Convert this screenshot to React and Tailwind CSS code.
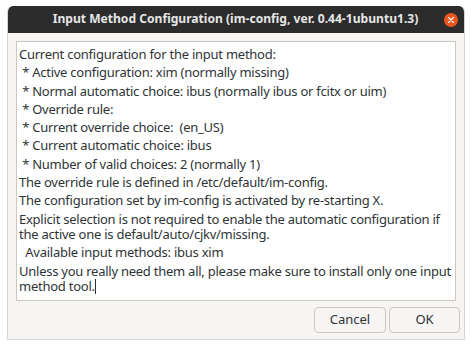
import React from 'react'

const lines = [
  'Current configuration for the input method:',
  ' * Active configuration: xim (normally missing)',
  ' * Normal automatic choice: ibus (normally ibus or fcitx or uim)',
  ' * Override rule:',
  ' * Current override choice:  (en_US)',
  ' * Current automatic choice: ibus',
  ' * Number of valid choices: 2 (normally 1)',
  'The override rule is defined in /etc/default/im-config.',
  'The configuration set by im-config is activated by re-starting X.',
]

const App = () => {
  return (
    <div className='w-[474px] h-[347px] bg-white pt-[6px] pl-[7px]' style={{ fontFamily: '"Noto Sans", "Open Sans", sans-serif' }}>
      <div className='w-[458px] h-[334px] flex flex-col bg-[#f6f5f4] rounded-t-[6px] border-x border-b border-[#d8d4d0] overflow-hidden'>
        <div className='h-[27px] bg-[#2c2c2c] flex items-center relative'>
          <p className='w-full text-center text-[#e6e6e6] font-bold text-[12.1px] leading-none pr-[1px]'>
            Input Method Configuration (im-config, ver. 0.44-1ubuntu1.3)
          </p>
          <div className='absolute right-[6px] top-[7px] w-[14px] h-[14px] rounded-full bg-[#e95420] flex items-center justify-center'>
            <svg width='6' height='6' viewBox='0 0 6 6'>
              <path d='M0.5 0.5L5.5 5.5M5.5 0.5L0.5 5.5' stroke='white' strokeWidth='1.3' strokeLinecap='round' />
            </svg>
          </div>
        </div>
        <div className='flex-1 px-[8px] pt-[8px] flex flex-col'>
          <div className='h-[260px] bg-white border border-[#cdc7c2] px-[2px] pt-[5px] text-[13px] tracking-[-0.25px] text-[#2e3436] whitespace-pre overflow-hidden'>
            {lines.map((l, i) => (
              <div key={i} className='leading-[15.5px] mb-[2.8px]'>{l}</div>
            ))}
            <div className='leading-[15.5px] mb-[2.8px]'>
              Explicit selection is not required to enable the automatic configuration if<br />the active one is default/auto/cjkv/missing.
            </div>
            <div className='leading-[15.5px] mb-[2.8px]'>{'  Available input methods: ibus xim'}</div>
            <div className='leading-[15.5px]'>
              Unless you really need them all, please make sure to install only one input<br />method tool.<span className='inline-block w-[1px] h-[15px] bg-[#2e3436] align-top' />
            </div>
          </div>
          <div className='flex justify-end gap-[3px] mt-[6px] mr-[-4px]'>
            <button className='w-[72px] h-[26px] rounded-[4px] border border-[#cdc7c2] bg-[#f6f5f4] text-[13px] text-[#2e3436]'>Cancel</button>
            <button className='w-[71px] h-[26px] rounded-[4px] border border-[#cdc7c2] bg-[#f6f5f4] text-[13px] text-[#2e3436]'>OK</button>
          </div>
        </div>
      </div>
    </div>
  )
}

export default App
